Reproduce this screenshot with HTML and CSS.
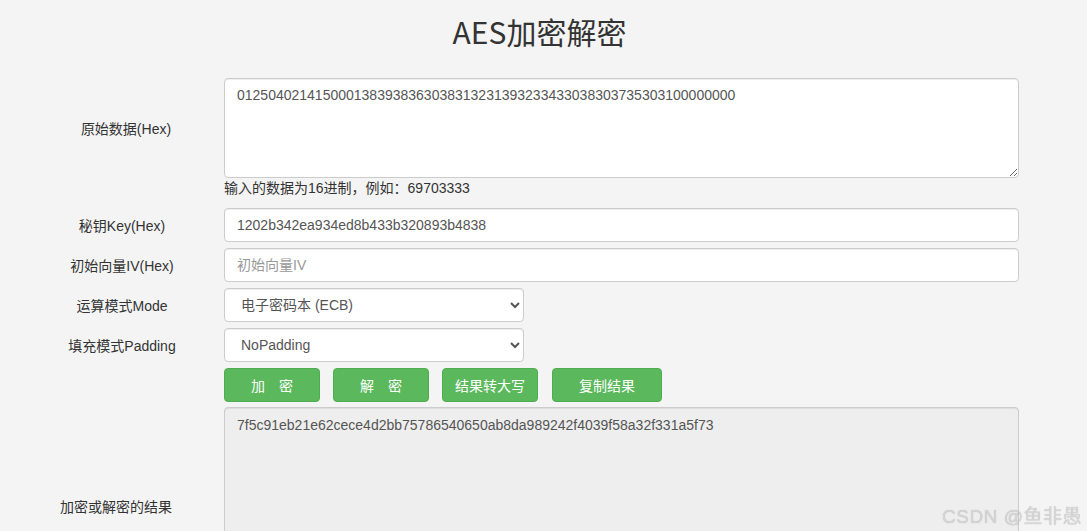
FILE: index.html
```
<!DOCTYPE html>
<html lang="zh-CN">
  <head>
    <meta charset="UTF-8" />
    <meta name="viewport" content="width=device-width, initial-scale=1.0" />
    <title>AES加密解密</title>
    <link rel="stylesheet" href="styles.css">
  </head>
  <body>
    <h1 class="page-title">AES加密解密</h1>

    <div class="aes-form">
      <label class="form-label" for="plain">原始数据(Hex)</label>
      <textarea class="form-control plain-area" id="plain">0125040214150001383938363038313231393233433038303735303100000000</textarea>

      <div></div>
      <div class="help-text">输入的数据为16进制，例如：69703333</div>

      <label class="form-label" for="key">秘钥Key(Hex)</label>
      <input class="form-control" type="text" id="key" value="1202b342ea934ed8b433b320893b4838" />

      <label class="form-label" for="iv">初始向量IV(Hex)</label>
      <input class="form-control" type="text" id="iv" placeholder="初始向量IV" />

      <label class="form-label" for="mode">运算模式Mode</label>
      <select class="form-control short-select" id="mode">
        <option>电子密码本 (ECB)</option>
        <option>密码分组链接 (CBC)</option>
      </select>

      <label class="form-label" for="padding">填充模式Padding</label>
      <select class="form-control short-select" id="padding">
        <option>NoPadding</option>
        <option>PKCS5Padding</option>
      </select>

      <div></div>
      <div class="btn-row">
        <button class="btn-green">加　密</button>
        <button class="btn-green">解　密</button>
        <button class="btn-green">结果转大写</button>
        <button class="btn-green btn-wide">复制结果</button>
      </div>

      <label class="form-label" for="result">加密或解密的结果</label>
      <textarea class="form-control result-area" id="result" readonly>7f5c91eb21e62cece4d2bb75786540650ab8da989242f4039f58a32f331a5f73</textarea>
    </div>

    <div class="watermark">CSDN @鱼非愚</div>
  </body>
</html>
```

FILE: styles.css
```
/* Reset */
body,
h1 {
  margin: 0;
  padding: 0;
}

body {
  font-family: "Liberation Sans", Arial, "Noto Sans CJK SC", sans-serif;
  font-size: 14px;
  color: #333;
  background-color: #f4f4f4;
  overflow: hidden;
}

.page-title {
  font-family: "Noto Sans CJK SC", sans-serif;
  font-weight: 400;
  font-size: 30px;
  line-height: 33px;
  text-align: center;
  margin: 15px 0 30px;
  padding-right: 8px;
  color: #333;
}

/* Form grid: label column + control column */
.aes-form {
  display: grid;
  grid-template-columns: 224px 795px;
  align-items: center;
}

.form-label {
  padding-left: 20px;
  text-align: center;
  margin-bottom: 6px;
}

.form-control {
  box-sizing: border-box;
  width: 100%;
  height: 34px;
  margin-bottom: 6px;
  padding: 6px 12px;
  font-family: "Liberation Sans", Arial, "Noto Sans CJK SC", sans-serif;
  font-size: 14px;
  line-height: 20px;
  color: #555;
  background-color: #fff;
  border: 1px solid #ccc;
  border-radius: 4px;
  box-shadow: inset 0 1px 1px rgba(0, 0, 0, 0.075);
}

.form-control::placeholder {
  color: #999;
}

.plain-area {
  height: 100px;
  margin-bottom: 0;
  resize: vertical;
}

.form-label:first-child {
  margin-bottom: 0;
  padding-left: 28px;
}

.help-text {
  line-height: 20px;
  margin-bottom: 10px;
  color: #333;
}

.short-select {
  width: 300px;
  padding-left: 12px;
}

.btn-row {
  display: flex;
  gap: 13px;
  margin-bottom: 5px;
}

.btn-green {
  width: 96px;
  height: 34px;
  padding: 0;
  font-family: "Liberation Sans", Arial, "Noto Sans CJK SC", sans-serif;
  font-size: 14px;
  color: #fff;
  background-color: #5cb85c;
  border: 1px solid #4cae4c;
  border-radius: 4px;
  cursor: pointer;
}

.btn-wide {
  width: 110px;
  margin-left: 1px;
}

.result-area {
  height: 200px;
  margin-bottom: 0;
  padding-top: 7px;
  background-color: #eee;
  resize: none;
}

.aes-form .form-label:last-of-type {
  margin-bottom: 0;
  padding-left: 8px;
  padding-bottom: 2px;
}

/* watermark over the bottom right corner */
.watermark {
  position: fixed;
  right: 5px;
  bottom: 3px;
  font-family: "Liberation Sans", "Noto Sans CJK SC", sans-serif;
  font-size: 19px;
  letter-spacing: 0.5px;
  color: #d6d6d6;
  text-shadow: 0 0 1px rgba(0, 0, 0, 0.3);
}
```
